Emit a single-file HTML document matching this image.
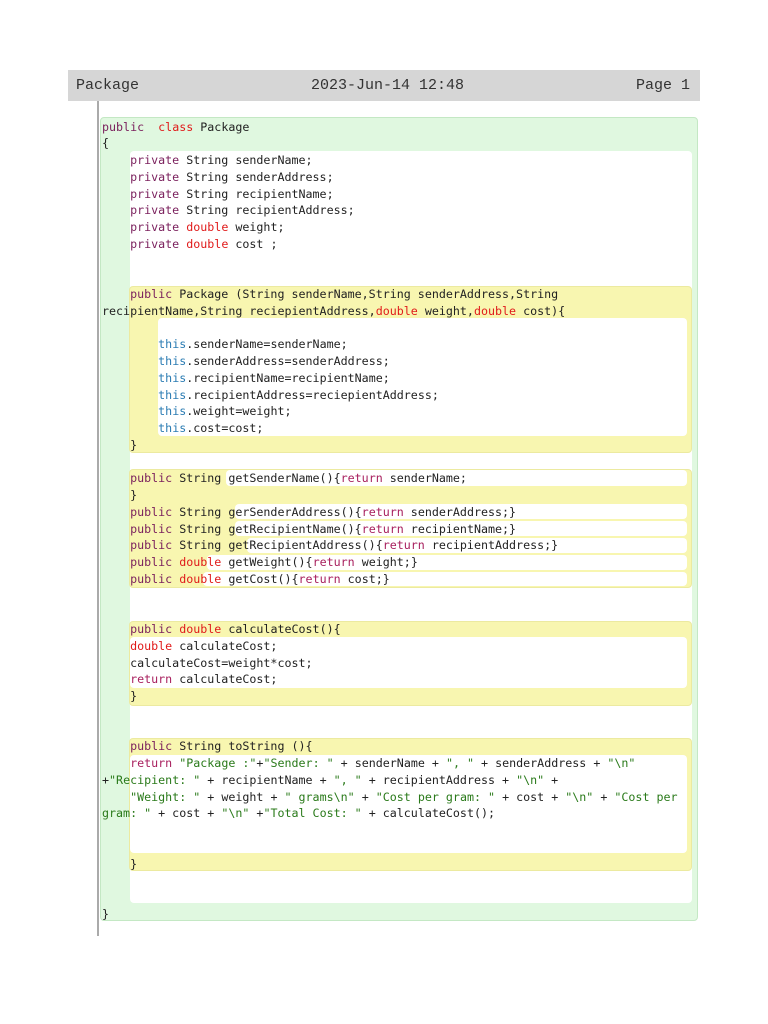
<!DOCTYPE html>
<html><head><style>
body{margin:0;width:768px;height:1024px;background:#fff;position:relative;overflow:hidden;font-family:"Liberation Mono",monospace}
.hdr{position:absolute;left:68px;top:70px;width:632px;height:31px;background:#d6d6d6;color:#333;font-size:15px;line-height:31px}
.hdr span{position:absolute;top:0}
.b{position:absolute;border-radius:4px}
.g{background:#e0f8e0;border:1px solid #c4e8c4}
.w{background:#fff}
.y{background:#f8f6b0;border:1px solid #eceaa0}
.code{position:absolute;left:102px;top:118.5px;font-size:11.67px;line-height:16.75px;color:#222;white-space:pre;margin:0}
.k{color:#7a1f5c}.r{color:#e01b1b}.t{color:#2b7cb3}.s{color:#2a7a1a}.rt{color:#a8205e}
</style></head><body>
<div class="hdr"><span style="left:8px">Package</span><span style="left:243px">2023-Jun-14 12:48</span><span style="right:10px">Page 1</span></div>
<div style="position:absolute;left:97px;top:101px;width:2px;height:835px;background:#aaa"></div>
<div class="b g" style="left:100px;top:117px;width:596px;height:802px"></div>
<div class="b w" style="left:130px;top:151px;width:562px;height:752px"></div>
<div class="b y" style="left:129px;top:286px;width:561px;height:165px"></div>
<div class="b w" style="left:158px;top:318px;width:529px;height:118px"></div>
<div class="b y" style="left:129px;top:469px;width:561px;height:117px"></div>
<div class="b w" style="left:226px;top:470px;width:461px;height:16px"></div>
<div class="b w" style="left:235px;top:504px;width:452px;height:15px"></div>
<div class="b w" style="left:235px;top:521px;width:452px;height:15px"></div>
<div class="b w" style="left:247px;top:538px;width:440px;height:15px"></div>
<div class="b w" style="left:207px;top:555px;width:480px;height:15px"></div>
<div class="b w" style="left:203px;top:572px;width:484px;height:14px"></div>
<div class="b y" style="left:129px;top:621px;width:561px;height:83px"></div>
<div class="b w" style="left:130px;top:637px;width:557px;height:51px"></div>
<div class="b y" style="left:129px;top:738px;width:561px;height:131px"></div>
<div class="b w" style="left:130px;top:755px;width:557px;height:98px"></div>
<pre class="code"><span class="k">public</span>  <span class="r">class</span> Package
{
    <span class="k">private</span> String senderName;
    <span class="k">private</span> String senderAddress;
    <span class="k">private</span> String recipientName;
    <span class="k">private</span> String recipientAddress;
    <span class="k">private</span> <span class="r">double</span> weight;
    <span class="k">private</span> <span class="r">double</span> cost ;


    <span class="k">public</span> Package (String senderName,String senderAddress,String
recipientName,String reciepientAddress,<span class="r">double</span> weight,<span class="r">double</span> cost){

        <span class="t">this</span>.senderName=senderName;
        <span class="t">this</span>.senderAddress=senderAddress;
        <span class="t">this</span>.recipientName=recipientName;
        <span class="t">this</span>.recipientAddress=reciepientAddress;
        <span class="t">this</span>.weight=weight;
        <span class="t">this</span>.cost=cost;
    }

    <span class="k">public</span> String getSenderName(){<span class="rt">return</span> senderName;
    }
    <span class="k">public</span> String gerSenderAddress(){<span class="rt">return</span> senderAddress;}
    <span class="k">public</span> String getRecipientName(){<span class="rt">return</span> recipientName;}
    <span class="k">public</span> String getRecipientAddress(){<span class="rt">return</span> recipientAddress;}
    <span class="k">public</span> <span class="r">double</span> getWeight(){<span class="rt">return</span> weight;}
    <span class="k">public</span> <span class="r">double</span> getCost(){<span class="rt">return</span> cost;}


    <span class="k">public</span> <span class="r">double</span> calculateCost(){
    <span class="r">double</span> calculateCost;
    calculateCost=weight*cost;
    <span class="rt">return</span> calculateCost;
    }


    <span class="k">public</span> String toString (){
    <span class="rt">return</span> <span class="s">"Package :"</span>+<span class="s">"Sender: "</span> + senderName + <span class="s">", "</span> + senderAddress + <span class="s">"\n"</span>
+<span class="s">"Recipient: "</span> + recipientName + <span class="s">", "</span> + recipientAddress + <span class="s">"\n"</span> +
    <span class="s">"Weight: "</span> + weight + <span class="s">" grams\n"</span> + <span class="s">"Cost per gram: "</span> + cost + <span class="s">"\n"</span> + <span class="s">"Cost per
gram: "</span> + cost + <span class="s">"\n"</span> +<span class="s">"Total Cost: "</span> + calculateCost();


    }


}</pre>
</body></html>
